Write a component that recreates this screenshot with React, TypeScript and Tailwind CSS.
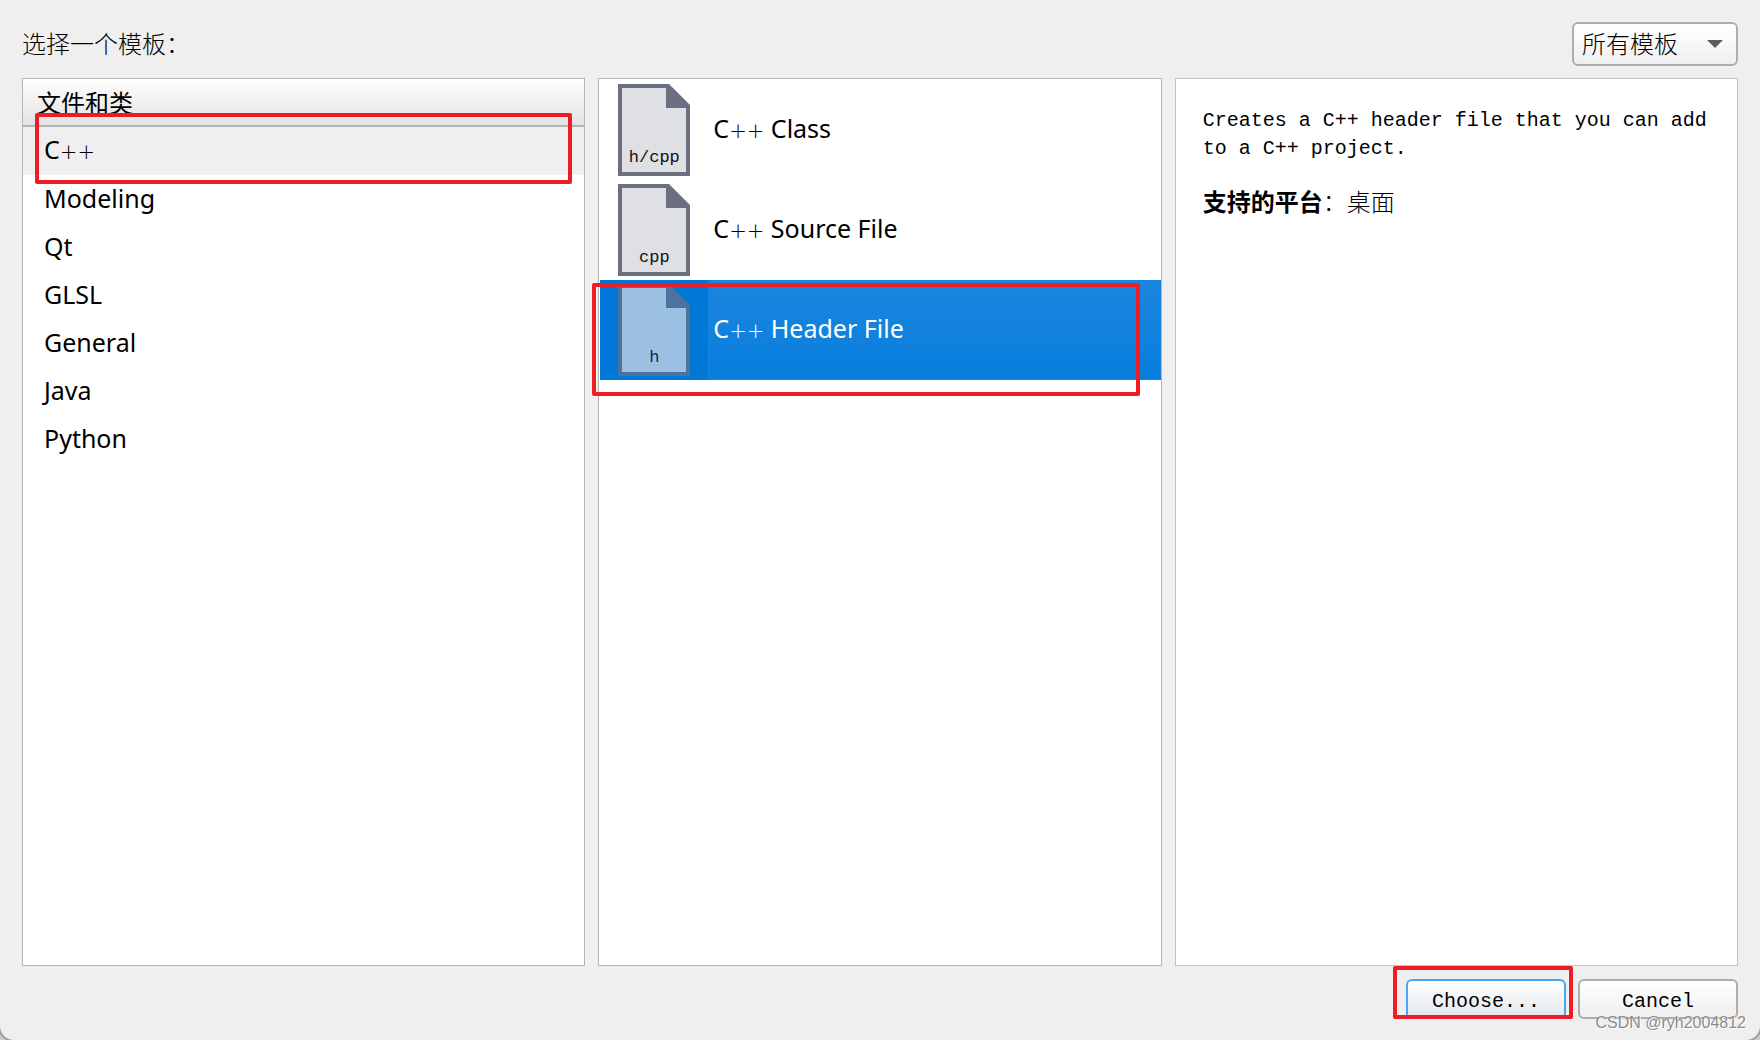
import { useState } from 'react';
import clsx from 'clsx';

interface Template {
  name: string;
  label: string;
  description: string;
}

const CATEGORIES = ['C++', 'Modeling', 'Qt', 'GLSL', 'General', 'Java', 'Python'];

const TEMPLATES: Template[] = [
  { name: 'C++ Class', label: 'h/cpp', description: 'Creates a C++ header and a source file for a new class that you can add to a C++ project.' },
  { name: 'C++ Source File', label: 'cpp', description: 'Creates a C++ source file that you can add to a C++ project.' },
  { name: 'C++ Header File', label: 'h', description: 'Creates a C++ header file that you can add to a C++ project.' },
];

// Red frame drawn over the step the reader has to click
function Highlight({ className }: { className: string }) {
  return <div className={clsx('pointer-events-none absolute z-10 rounded-[2px] border-4 border-[#ee1c24]', className)} />;
}

// The plus signs come from a wider face than the letters
function ItemName({ name }: { name: string }) {
  const [before, after] = name.split('++');
  return (
    <span className='block pb-0.5 font-["Noto_Sans",sans-serif] text-[25px] leading-8 whitespace-pre'>
      {before}
      {after !== undefined && <span className='font-["DejaVu_Sans",sans-serif] text-[21px] font-extralight'>++</span>}
      {after}
    </span>
  );
}

function FileIcon({ label, selected }: { label: string; selected: boolean }) {
  return (
    <span className="relative block h-[92px] w-[72px] shrink-0">
      <svg viewBox="0 0 72 92" className="block h-full w-full" aria-hidden="true">
        <path d="M0 0H51L72 21V92H0Z" fill={selected ? '#4b739f' : '#6b7080'} />
        <path d="M4 4H48V24H68V88H4Z" fill={selected ? '#9bc0e2' : '#dfe0e4'} />
      </svg>
      <span
        className={clsx(
          'absolute inset-x-0 bottom-1.5 text-center font-["Liberation_Mono",monospace] text-[17px] leading-6',
          selected ? 'text-[#0b2b4a]' : 'text-[#111111]'
        )}
      >
        {label}
      </span>
    </span>
  );
}

export default function App() {
  const [category, setCategory] = useState('C++');
  const [selected, setSelected] = useState(2);

  return (
    <div className="overflow-hidden bg-[#cccccc]">
      <div className='flex min-h-screen flex-col rounded-b-[14px] bg-[#efefef] px-[22px] pt-[22px] pb-[21px] font-["Liberation_Mono","Noto_Sans_CJK_SC",monospace] text-xl text-black shadow-[0_0_0_2px_#9c9c9c]'>
        <header className="mb-3 flex h-11 items-center justify-between">
          <label htmlFor="filter" className='pb-0.5 font-["Noto_Sans_CJK_SC",sans-serif] text-2xl font-light'>
            选择一个模板：
          </label>
          <div className="relative">
            <select
              id="filter"
              className='h-11 w-[166px] appearance-none rounded-md border-2 border-[#adadad] bg-linear-to-b from-white to-[#efefef] pb-0.5 pl-2 font-["Noto_Sans_CJK_SC",sans-serif] text-2xl leading-9 font-light'
            >
              <option>所有模板</option>
            </select>
            <svg viewBox="0 0 16 8" className="pointer-events-none absolute top-[18px] right-[15px] h-2 w-4" aria-hidden="true">
              <path d="M0 0H16L8 8Z" fill="#5c5c5c" />
            </svg>
          </div>
        </header>

        <main className="grid flex-1 grid-cols-3 gap-[13px]">
          {/* Categories */}
          <section className="relative border border-[#b5b5b5] bg-white">
            <h2 className='flex h-12 items-center border-b-2 border-[#b5b5b5] bg-linear-to-b from-white to-[#e2e2e2] pl-3.5 font-["Noto_Sans_CJK_SC",sans-serif] text-2xl'>
              文件和类
            </h2>
            <ul>
              {CATEGORIES.map(name => (
                <li key={name}>
                  <button
                    onClick={() => setCategory(name)}
                    className={clsx('flex h-12 w-full items-center pl-[21px] text-left', name === category && 'bg-[#efefef]')}
                  >
                    <ItemName name={name} />
                  </button>
                </li>
              ))}
            </ul>
            <Highlight className="top-[34px] right-3 left-3 h-[71px]" />
          </section>

          {/* Templates of the chosen category */}
          <section className="relative border border-[#b5b5b5] bg-white pt-px pl-px">
            <ul>
              {TEMPLATES.map((template, i) => (
                <li key={template.name}>
                  <button
                    onClick={() => setSelected(i)}
                    className={clsx('flex h-[100px] w-full text-left', i === selected && 'bg-[#0078d7]')}
                  >
                    <span className="flex h-full w-[108px] shrink-0 items-center pl-[18px]">
                      <FileIcon label={template.label} selected={i === selected} />
                    </span>
                    <span
                      className={clsx(
                        'flex h-full flex-1 items-center rounded-[3px] border pl-1',
                        i === selected
                          ? 'border-[#1a84dc] bg-linear-to-b from-[#1a86de] to-[#067edd] text-white'
                          : 'border-transparent'
                      )}
                    >
                      <ItemName name={template.name} />
                    </span>
                  </button>
                </li>
              ))}
            </ul>
            <Highlight className="top-[204px] right-[21px] -left-[7px] h-[113px]" />
          </section>

          {/* Description */}
          <section className="border border-[#c3c3c3] bg-white px-[27px] py-7">
            <p className="leading-7">{TEMPLATES[selected].description}</p>
            <p className='mt-6 font-["Noto_Sans_CJK_SC",sans-serif] text-2xl leading-7 font-light'>
              <b className="font-bold">支持的平台</b>：桌面
            </p>
          </section>
        </main>

        <footer className="relative mt-[13px] flex justify-end gap-3">
          <div className="relative">
            <button className="block h-10 w-40 rounded-md border-2 border-[#42a8f5] bg-linear-to-b from-white to-[#e3e8ee] pt-1.5">
              Choose...
            </button>
            <Highlight className="-top-[13px] -right-[7px] bottom-0 -left-[13px]" />
          </div>
          <button className="block h-10 w-40 rounded-md border-2 border-[#adadad] bg-linear-to-b from-white to-[#efefef] pt-1.5">
            Cancel
          </button>
          <span className='pointer-events-none absolute -right-2 -bottom-4 font-["Liberation_Sans",sans-serif] text-base leading-6 text-[#8c8c8c] [text-shadow:1px_1px_0_#ffffff]'>
            CSDN @ryh2004812
          </span>
        </footer>
      </div>
    </div>
  );
}
